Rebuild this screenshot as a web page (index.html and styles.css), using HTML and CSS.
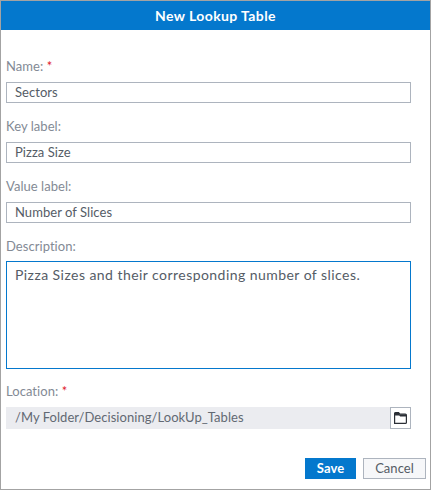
FILE: index.html
```html
<!DOCTYPE html>
<html lang="en">
<head>
<meta charset="UTF-8">
<title>New Lookup Table</title>
<link rel="stylesheet" href="styles.css">
</head>
<body>
<div class="dialog">
    <div class="header">New Lookup Table</div>
    <div class="form">
        <div class="label name-label">Name: <span class="req">*</span></div>
        <div class="input">Sectors</div>
        <div class="label">Key label:</div>
        <div class="input">Pizza Size</div>
        <div class="label">Value label:</div>
        <div class="input">Number of Slices</div>
        <div class="label desc-label">Description:</div>
        <div class="textarea">Pizza Sizes and their corresponding number of slices.</div>
        <div class="label location-label">Location: <span class="req">*</span></div>
        <div class="location">
            <div class="path">/My Folder/Decisioning/LookUp_Tables</div>
            <div class="browse">
                <svg width="13" height="12" viewBox="0 0 13 12">
                    <path d="M.6 11.4V1.6C.6 1 1 .6 1.6 .6H4.6L5.8 2.2H11.4C12 2.2 12.4 2.6 12.4 3.2V10.4C12.4 11 12 11.4 11.4 11.4Z" fill="none" stroke="#2b2f36" stroke-width="1.2"/>
                    <path d="M.6 3.6H5.2L6.2 4.4H12.4V2.4H5.8L4.6 .6H.6Z" fill="#2b2f36"/>
                </svg>
            </div>
        </div>
    </div>
    <div class="footer">
        <div class="btn save">Save</div>
        <div class="btn cancel">Cancel</div>
    </div>
</div>
</body>
</html>
```

FILE: styles.css
```css
html, body {
    margin: 0;
    padding: 0;
}
body {
    width: 431px;
    height: 490px;
    overflow: hidden;
    background-color: #fff;
    font-family: Lato, "Open Sans", sans-serif;
    font-size: 13px;
    letter-spacing: 0.05px;
    color: #555c66;
}
.dialog {
    box-sizing: border-box;
    width: 431px;
    height: 490px;
    border: 1px solid #a3a3a3;
    display: flex;
    flex-direction: column;
}
.header {
    height: 29px;
    background-color: #0478cd;
    color: #fff;
    font-weight: 700;
    font-size: 14px;
    letter-spacing: 0.4px;
    line-height: 29px;
    text-align: center;
}
.form {
    padding: 0 19px 0 5px;
    flex: 1;
}
.label {
    height: 20px;
    margin-top: 13px;
    margin-bottom: 6px;
    line-height: 20px;
    color: #838a95;
}
.name-label {
    margin-top: 26px;
}
.desc-label {
    margin-bottom: 5px;
}
.location-label {
    margin-top: 12px;
}
.req {
    color: #e0202a;
}
.input {
    box-sizing: border-box;
    height: 21px;
    border: 1px solid #adb4be;
    padding-left: 8px;
    line-height: 19px;
}
.textarea {
    box-sizing: border-box;
    height: 108px;
    border: 1px solid #0478cd;
    padding: 3px 8px;
    line-height: 20px;
    font-size: 14px;
    letter-spacing: 0.45px;
}
.location {
    display: flex;
    height: 22px;
}
.path {
    flex: 1;
    background-color: #ebecf0;
    padding-left: 9px;
    line-height: 21px;
    color: #626973;
}
.browse {
    box-sizing: border-box;
    width: 21px;
    border: 1px solid #adb4be;
    display: flex;
    align-items: center;
    justify-content: center;
}
.footer {
    display: flex;
    justify-content: flex-end;
    gap: 7px;
    padding-right: 4px;
    margin-bottom: 10px;
}
.btn {
    box-sizing: border-box;
    height: 21px;
    line-height: 21px;
    text-align: center;
}
.save {
    width: 51px;
    background-color: #0478cd;
    color: #fff;
    font-weight: 700;
}
.cancel {
    width: 63px;
    background-color: #f6f7f9;
    border: 1px solid #adb4be;
    line-height: 19px;
}
```
